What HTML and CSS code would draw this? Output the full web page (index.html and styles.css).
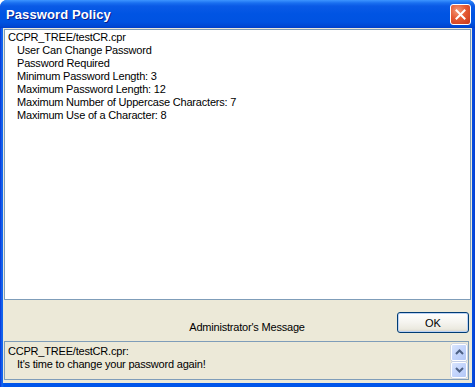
FILE: index.html
```html
<!DOCTYPE html>
<html>
<head>
<meta charset="utf-8">
<link rel="stylesheet" href="styles.css">
</head>
<body>
<div class="window">
  <div class="titlebar">
    <span class="title">Password Policy</span>
    <span class="close">
      <svg width="11" height="11" viewBox="0 0 11 11"><path d="M1.5 1.5 L9.5 9.5 M9.5 1.5 L1.5 9.5" stroke="#fff" stroke-width="2" stroke-linecap="square"/></svg>
    </span>
  </div>
  <div class="client">
    <div class="policy">
      <div class="line">CCPR_TREE/testCR.cpr</div>
      <div class="line ind">User Can Change Password</div>
      <div class="line ind">Password Required</div>
      <div class="line ind">Minimum Password Length: 3</div>
      <div class="line ind">Maximum Password Length: 12</div>
      <div class="line ind">Maximum Number of Uppercase Characters: 7</div>
      <div class="line ind">Maximum Use of a Character: 8</div>
    </div>
    <div class="actions">
      <div class="label">Administrator's Message</div>
      <button class="ok">OK</button>
    </div>
    <div class="message">
      <div class="msgtext">
        <div class="line">CCPR_TREE/testCR.cpr:</div>
        <div class="line ind">It's time to change your password again!</div>
      </div>
      <div class="scroll">
        <span class="sbtn"><svg width="9" height="6" viewBox="0 0 9 6"><path d="M1 5 L4.5 1.5 L8 5" fill="none" stroke="#4d6185" stroke-width="2"/></svg></span>
        <span class="sbtn"><svg width="9" height="6" viewBox="0 0 9 6"><path d="M1 1 L4.5 4.5 L8 1" fill="none" stroke="#4d6185" stroke-width="2"/></svg></span>
      </div>
    </div>
  </div>
</div>
</body>
</html>
```
FILE: styles.css
```css
html, body {
  margin: 0;
  padding: 0;
  background: #fff;
}
.window {
  width: 475px;
  height: 387px;
  display: flex;
  flex-direction: column;
  background: linear-gradient(90deg, #0831d9 0, #166aee 2px, #0055ea 4px, #0055ea calc(100% - 4px), #0a3fd0 100%);
  border-radius: 7px 7px 0 0;
  overflow: hidden;
  font-family: "Liberation Sans", Arial, sans-serif;
}
.titlebar {
  height: 28px;
  flex: none;
  display: flex;
  align-items: center;
  justify-content: space-between;
  padding: 0 4px 0 6px;
  box-sizing: border-box;
  background: linear-gradient(180deg, #3d95ff 0, #1a6ff0 3px, #0a5ae6 6px, #0054e3 14px, #0053e1 22px, #0049d4 26px, #003fcb 28px);
}
.title {
  color: #fff;
  font-weight: bold;
  font-size: 13px;
  text-shadow: 1px 1px 0 #0a1e8c;
  padding-top: 1px;
  letter-spacing: 0.1px;
}
.close {
  width: 21px;
  height: 21px;
  box-sizing: border-box;
  border: 1px solid #fff;
  border-radius: 3px;
  background: radial-gradient(circle at 35% 30%, #f29a7a 0, #e55a33 45%, #c7361a 100%);
  display: flex;
  align-items: center;
  justify-content: center;
  margin-top: 1px;
}
.close svg { display: block; }
.client {
  flex: 1;
  margin: 0 3px 4px 3px;
  padding: 1px 1px 3px 1px;
  background: #ece9d8;
  display: flex;
  flex-direction: column;
  font-size: 11px;
  color: #000;
}
.policy {
  height: 271px;
  flex: none;
  box-sizing: border-box;
  border: 1px solid #7f9db9;
  background: #fff;
  padding: 1px 3px;
}
.line {
  height: 13px;
  line-height: 13px;
  white-space: nowrap;
  letter-spacing: -0.2px;
}
.ind { padding-left: 9px; }
.actions {
  height: 41px;
  flex: none;
  display: flex;
  align-items: flex-start;
}
.label {
  flex: 1;
  text-align: center;
  padding-left: 93px;
  padding-top: 21px;
  line-height: 13px;
  letter-spacing: -0.2px;
}
.ok {
  width: 72px;
  height: 21px;
  margin: 12px 2px 0 0;
  box-sizing: border-box;
  border: 1px solid #003c74;
  border-radius: 3px;
  background: linear-gradient(180deg, #ffffff 0, #f5f4ef 50%, #ebe9df 85%, #d6d0c5 100%);
  font-family: "Liberation Sans", Arial, sans-serif;
  font-size: 11px;
  color: #000;
  padding: 0;
  box-shadow: inset 0 0 0 1px #bcd2f4;
}
.message {
  height: 39px;
  flex: none;
  box-sizing: border-box;
  border: 1px solid #7f9db9;
  margin-right: 2px;
  display: flex;
  padding: 1px 1px 1px 3px;
}
.msgtext {
  flex: 1;
  padding-top: 2px;
}
.scroll {
  display: flex;
  flex-direction: column;
  gap: 1px;
  padding-top: 1px;
}
.sbtn {
  width: 16px;
  height: 17px;
  box-sizing: border-box;
  border: 1px solid #fff;
  border-radius: 2px;
  background: linear-gradient(135deg, #d8e4fd 0, #c3d4fc 50%, #b4c8f6 100%);
  box-shadow: 0 0 0 0.5px #b5c6ee;
  display: flex;
  align-items: center;
  justify-content: center;
}
.sbtn svg { display: block; }
```
